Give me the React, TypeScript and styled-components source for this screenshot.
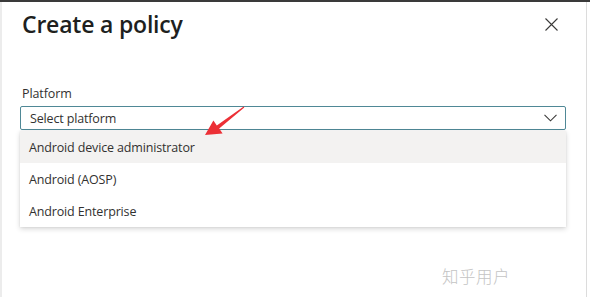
import React from 'react';
import styled, { createGlobalStyle } from 'styled-components';

const GlobalStyle = createGlobalStyle`
  html, body {
    margin: 0;
    padding: 0;
    background: #ffffff;
    overflow: hidden;
  }
  body {
    font-family: "Segoe UI", "Open Sans", "Noto Sans", sans-serif;
    color: #323130;
  }
`;

const Frame = styled.div`
  position: relative;
  width: 590px;
  height: 297px;
  box-sizing: border-box;
  border-top: 2px solid #3a3a3a;
  display: flex;
  background: #ffffff;
`;

const Panel = styled.div`
  width: 587px;
  height: 100%;
  box-sizing: border-box;
  border-left: 2px solid #ececec;
  border-right: 1px solid #dcdcdc;
  padding: 0 20px 0 18px;
  display: flex;
  flex-direction: column;
`;

const Header = styled.div`
  display: flex;
  align-items: center;
  justify-content: space-between;
  height: 44px;
  padding-left: 2px;
`;

const Title = styled.h1`
  margin: 0;
  font-size: 23px;
  font-weight: 600;
  color: #201f1e;
  letter-spacing: -0.2px;
`;

const CloseButton = styled.button`
  width: 24px;
  height: 24px;
  border: 0;
  padding: 0;
  background: transparent;
  display: flex;
  align-items: center;
  justify-content: center;
  margin-right: 3px;
  cursor: pointer;
`;

const Field = styled.div`
  position: relative;
  margin-top: 40px;
  display: flex;
  flex-direction: column;
  gap: 4px;
`;

const Label = styled.label`
  font-size: 12.5px;
  letter-spacing: -0.1px;
  line-height: 16px;
  color: #323130;
  padding-left: 2px;
`;

const SelectBox = styled.div`
  height: 24px;
  box-sizing: border-box;
  border: 1px solid #4f8896;
  border-radius: 2px;
  display: flex;
  align-items: center;
  justify-content: space-between;
  padding: 0 8px 0 9px;
  font-size: 12.5px;
  letter-spacing: -0.15px;
  color: #323130;
`;

const Menu = styled.ul`
  position: absolute;
  left: 0;
  right: 0;
  top: 45px;
  margin: 0;
  padding: 0;
  list-style: none;
  background: #ffffff;
  box-shadow: 0 2px 5px rgba(0, 0, 0, 0.16), 0 0 2px rgba(0, 0, 0, 0.08);
`;

const MenuItem = styled.li<{ $active?: boolean }>`
  height: 32px;
  display: flex;
  align-items: center;
  padding-left: 9px;
  font-size: 12.5px;
  letter-spacing: -0.15px;
  color: #323130;
  background: ${(p) => (p.$active ? '#f3f2f1' : 'transparent')};
`;

const Overlay = styled.svg`
  position: absolute;
  left: 0;
  top: -2px;
  pointer-events: none;
`;

const Watermark = styled.div`
  position: absolute;
  left: 442px;
  top: 262px;
  font-family: "Noto Sans CJK SC", sans-serif;
  font-weight: 300;
  font-size: 16.5px;
  letter-spacing: 0.5px;
  color: #c4c4c4;
  text-shadow: 0 0 2px #fff;
`;

const options = ['Android device administrator', 'Android (AOSP)', 'Android Enterprise'];

export default function App() {
  return (
    <>
      <GlobalStyle />
      <Frame>
        <Panel>
          <Header>
            <Title>Create a policy</Title>
            <CloseButton aria-label="Close">
              <svg width="13" height="13" viewBox="0 0 13 13">
                <path d="M0.5 0.5 L12.5 12.5 M12.5 0.5 L0.5 12.5" stroke="#3b3a39" strokeWidth="1.1" fill="none" />
              </svg>
            </CloseButton>
          </Header>
          <Field>
            <Label>Platform</Label>
            <SelectBox>
              <span>Select platform</span>
              <svg width="13" height="8" viewBox="0 0 13 8">
                <path d="M0.5 0.8 L6.5 6.8 L12.5 0.8" stroke="#3b3a39" strokeWidth="1.1" fill="none" />
              </svg>
            </SelectBox>
            <Menu>
              {options.map((o, i) => (
                <MenuItem key={o} $active={i === 0}>
                  {o}
                </MenuItem>
              ))}
            </Menu>
          </Field>
        </Panel>
        <Overlay width="590" height="297" viewBox="0 0 590 297">
          <polygon
            points="205,135 213.4,120.5 216.8,125.4 243.7,106.6 244.3,107.4 219.2,128.6 222.6,133.5"
            fill="#ec3036"
          />
        </Overlay>
        <Watermark>知乎用户</Watermark>
      </Frame>
    </>
  );
}
